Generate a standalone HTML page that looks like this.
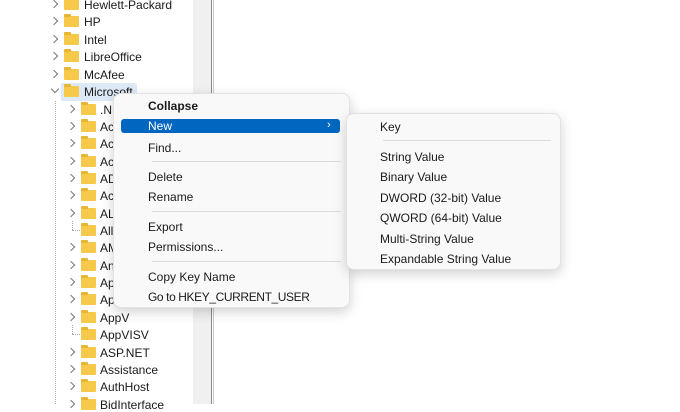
<!DOCTYPE html>
<html><head><style>
body{margin:0;width:680px;height:404px;overflow:hidden;background:#fff;font-family:"Liberation Sans",sans-serif;font-size:12px;color:#1a1a1a;position:relative}
.a{position:absolute;white-space:nowrap}
.f{position:absolute;width:15px;height:11px;background:#f6c94a;border-radius:1px}
.f:before{content:"";position:absolute;left:0;top:-2px;width:7px;height:3px;background:#e9b534;border-radius:1px 1px 0 0}
.c{position:absolute;width:5px;height:5px;border-right:1px solid #777;border-bottom:1px solid #777;transform:rotate(-45deg)}
.t{position:absolute;line-height:14px;white-space:nowrap;margin-top:1px}
.menu{position:absolute;background:#f9f9f9;border:1px solid #e2e2e2;border-radius:8px;box-shadow:0 4px 12px rgba(0,0,0,.18)}
.sep{position:absolute;height:1px;background:#dcdcdc}
</style></head><body>
<div class="a" style="left:193px;top:0;width:18px;height:404px;background:#f0f0f0"></div>
<div class="a" style="left:211px;top:0;width:1px;height:404px;background:#8a8a8a"></div>
<div class="a" style="left:213px;top:0;width:1px;height:404px;background:#c8c8c8"></div>
<div class="a" style="left:61px;top:83px;width:76px;height:18px;background:#dde9f6;border-radius:2px"></div>
<div class="a" style="left:55px;top:101px;width:0;height:303px;border-left:1px dotted #aaa"></div>
<div id="tree"></div>
<div class="menu" style="left:113px;top:93px;width:235px;height:213px"></div>
<div class="a" style="left:121px;top:119px;width:219px;height:14px;background:#0067c0;border-radius:3px"></div>
<div class="t" style="left:148px;top:98px;font-weight:bold">Collapse</div>
<div class="t" style="left:148px;top:118px;color:#fff">New</div>
<div class="t" style="left:327px;top:117px;color:#fff;font-size:11px">›</div>
<div class="t" style="left:148px;top:140px">Find...</div>
<div class="sep" style="left:152px;top:161px;width:189px"></div>
<div class="t" style="left:148px;top:169px">Delete</div>
<div class="t" style="left:148px;top:189px">Rename</div>
<div class="sep" style="left:152px;top:211px;width:189px"></div>
<div class="t" style="left:148px;top:219px">Export</div>
<div class="t" style="left:148px;top:239px">Permissions...</div>
<div class="sep" style="left:152px;top:261px;width:189px"></div>
<div class="t" style="left:148px;top:269px">Copy Key Name</div>
<div class="t" style="left:148px;top:289px;letter-spacing:-0.4px">Go to HKEY_CURRENT_USER</div>
<div class="menu" style="left:346px;top:113px;width:213px;height:155px"></div>
<div class="t" style="left:380px;top:119px">Key</div>
<div class="sep" style="left:383px;top:140px;width:168px"></div>
<div class="t" style="left:380px;top:149px">String Value</div>
<div class="t" style="left:380px;top:169px">Binary Value</div>
<div class="t" style="left:380px;top:190px">DWORD (32-bit) Value</div>
<div class="t" style="left:380px;top:210px">QWORD (64-bit) Value</div>
<div class="t" style="left:380px;top:231px">Multi-String Value</div>
<div class="t" style="left:380px;top:251px">Expandable String Value</div>
<script>
var h='';
var tp=[["Hewlett-Packard",4],["HP",21.4],["Intel",38.8],["LibreOffice",56.2],["McAfee",73.6],["Microsoft",91]];
tp.forEach(function(r,i){var y=r[1];
 if(i<5)h+='<div class="c" style="left:51px;top:'+(y-3)+'px"></div>';
 else h+='<div class="c" style="left:52px;top:'+(y-5)+'px;transform:rotate(45deg)"></div>';
 h+='<div class="f" style="left:64px;top:'+(y-5)+'px"></div><div class="t" style="left:84px;top:'+(y-7)+'px">'+r[0]+'</div>';});
var ch=[".NET","Ac","Ac","Ac","AD","Ac","AL","All","AM","An","Ap","Ap","AppV","AppVISV","ASP.NET","Assistance","AuthHost","BidInterface"];
ch.forEach(function(n,i){var y=108.5+i*17.36;
 if(n=="All"||n=="AppVISV")h+='<div class="a" style="left:72px;top:'+(y-9)+'px;height:9px;border-left:1px dotted #aaa"></div><div class="a" style="left:72px;top:'+y+'px;width:8px;border-top:1px dotted #aaa"></div>';
 else h+='<div class="c" style="left:68px;top:'+(y-3)+'px"></div>';
 h+='<div class="f" style="left:81px;top:'+(y-5)+'px"></div><div class="t" style="left:100px;top:'+(y-7)+'px">'+n+'</div>';});
document.getElementById('tree').innerHTML=h;
</script>
</body></html>
